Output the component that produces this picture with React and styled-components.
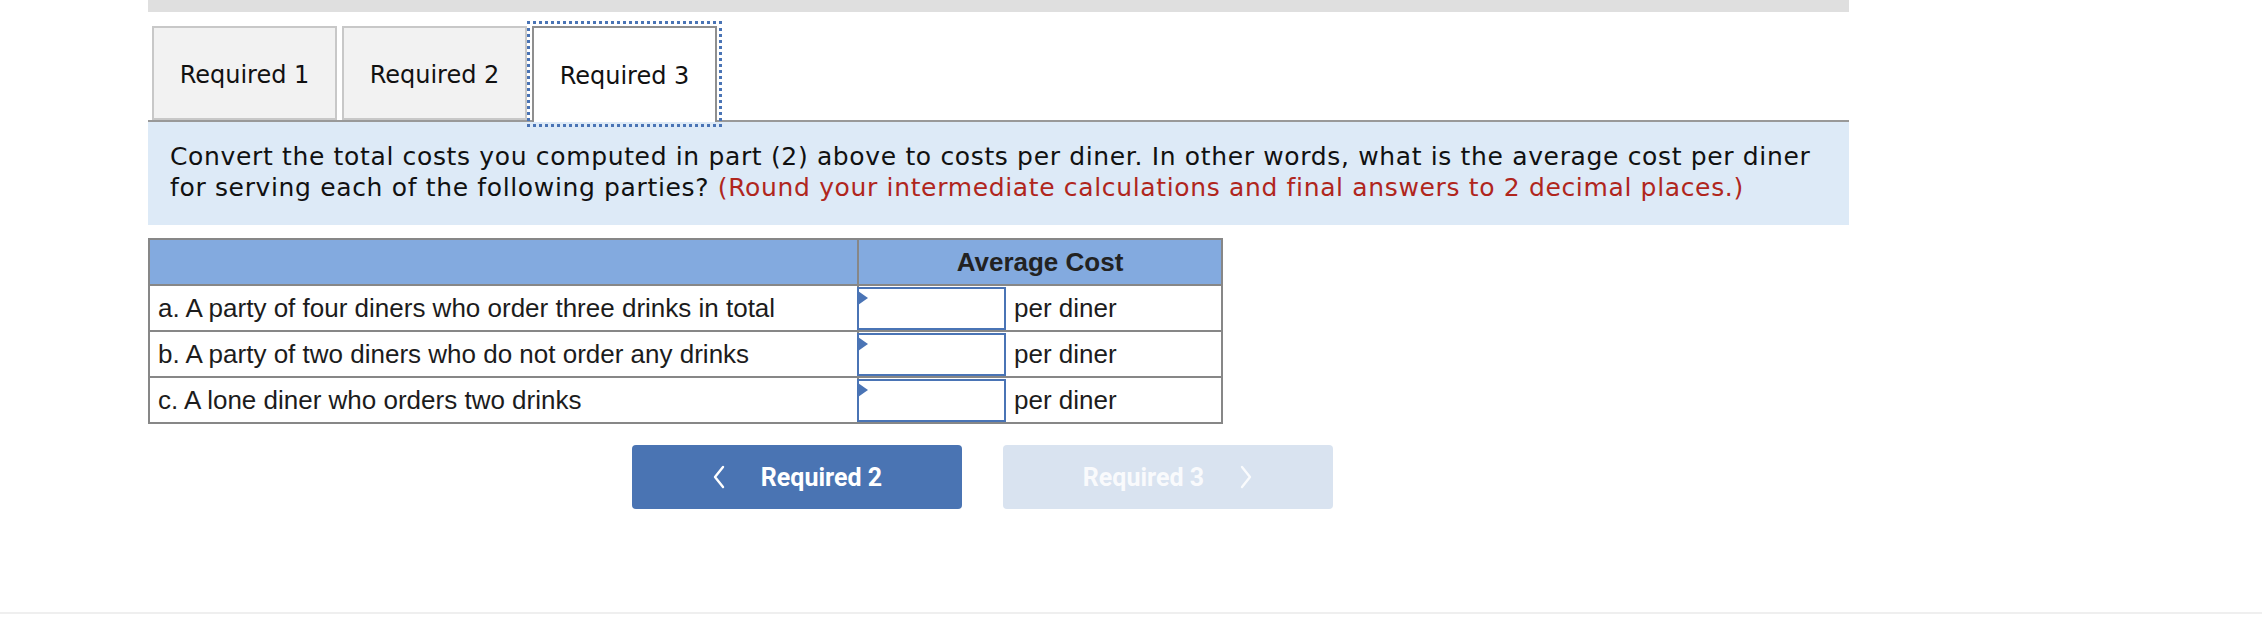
import React from "react"
import styled, { createGlobalStyle } from "styled-components"

const GlobalStyle = createGlobalStyle`
  html, body {
    margin: 0;
    padding: 0;
    background: #ffffff;
  }
  body {
    font-family: "Liberation Sans", Arial, sans-serif;
  }
`

const Page = styled.div`
  width: 2262px;
  height: 614px;
  box-sizing: border-box;
  border-bottom: 2px solid #efefef;
`

const Question = styled.div`
  width: 1701px;
  margin-left: 148px;
`

const TopBar = styled.div`
  height: 12px;
  background: #dfdfdf;
`

const TabStrip = styled.div`
  display: flex;
  gap: 5px;
  margin-top: 14px;
  padding-left: 4px;
  border-bottom: 2px solid #999999;
`

const Tab = styled.button`
  width: 185px;
  box-sizing: border-box;
  margin-bottom: ${p => (p.$active ? "-2px" : "0")};
  height: ${p => (p.$active ? "96px" : "94px")};
  padding: ${p => (p.$active ? "4px 0 2px" : "4px 0 0")};
  background: ${p => (p.$active ? "#ffffff" : "#f2f2f2")};
  border: 2px solid ${p => (p.$active ? "#8f8f8f" : "#c8c8c8")};
  border-bottom: ${p => (p.$active ? "none" : "2px solid #c8c8c8")};
  outline: ${p => (p.$active ? "3px dotted #4a74b5" : "none")};
  outline-offset: 2px;
  font-family: "DejaVu Sans", Verdana, sans-serif;
  font-size: 24px;
  color: #111111;
  cursor: pointer;
`

const Prompt = styled.div`
  background: #ddeaf7;
  padding: 20px 30px 22px 22px;
  font-family: "DejaVu Sans", Verdana, sans-serif;
  font-size: 25px;
  letter-spacing: 0.65px;
  line-height: 30.5px;
  color: #111111;
`

const Hint = styled.span`
  color: #b0261d;
`

const Grid = styled.table`
  margin-top: 13px;
  width: 1073px;
  border-collapse: collapse;
  table-layout: fixed;
  font-family: "Liberation Sans", Arial, sans-serif;
  font-size: 26px;
  color: #1c1c1c;
`

const HeadCell = styled.th`
  height: 44px;
  background: #83aadf;
  border: 2px solid #878787;
  font-weight: bold;
  font-size: 26px;
  color: #222222;
  text-align: center;
  padding: 0;
`

const Cell = styled.td`
  height: 44px;
  border: 2px solid #878787;
  border-left: ${p => (p.$joined ? "none" : "2px solid #878787")};
  border-right: ${p => (p.$open ? "none" : "2px solid #878787")};
  padding: ${p => (p.$tight ? "0" : "0 0 0 8px")};
  vertical-align: middle;
  white-space: nowrap;
`

const AnswerBox = styled.div`
  position: relative;
  height: 43px;
  margin-left: -2px;
  box-sizing: border-box;
  border: 2px solid #4a74b5;
  background: #ffffff;

  &::before {
    content: "";
    position: absolute;
    left: -1px;
    top: 2px;
    border-top: 7px solid transparent;
    border-bottom: 7px solid transparent;
    border-left: 10px solid #4a74b5;
  }
`

const NavRow = styled.div`
  display: flex;
  gap: 41px;
  margin-top: 21px;
  padding-left: 484px;
`

const NavButton = styled.button`
  width: 330px;
  height: 64px;
  border: none;
  border-radius: 4px;
  background: ${p => (p.$disabled ? "#d9e3f0" : "#4a74b3")};
  color: ${p => (p.$disabled ? "rgba(255,255,255,0.85)" : "#ffffff")};
  display: flex;
  align-items: center;
  justify-content: center;
  gap: 35px;
  font-family: Roboto, "Liberation Sans", Arial, sans-serif;
  font-weight: 700;
  font-size: 25px;
  padding: 0;
  cursor: ${p => (p.$disabled ? "default" : "pointer")};
`

const Chevron = ({ dir }) => (
  <svg width="14" height="24" viewBox="0 0 14 24" fill="none">
    <path
      d={dir === "left" ? "M11 2 L3 12 L11 22" : "M3 2 L11 12 L3 22"}
      stroke="currentColor"
      strokeWidth="2.4"
      strokeLinecap="round"
      strokeLinejoin="round"
    />
  </svg>
)

const rows = [
  "a. A party of four diners who order three drinks in total",
  "b. A party of two diners who do not order any drinks",
  "c. A lone diner who orders two drinks",
]

export default function App() {
  return (
    <>
      <GlobalStyle />
      <Page>
        <Question>
          <TopBar />
          <TabStrip>
            <Tab>Required 1</Tab>
            <Tab>Required 2</Tab>
            <Tab $active>Required 3</Tab>
          </TabStrip>
          <Prompt>
            Convert the total costs you computed in part (2) above to costs per diner. In other words, what is the average cost per diner
            for serving each of the following parties?{" "}
            <Hint>(Round your intermediate calculations and final answers to 2 decimal places.)</Hint>
          </Prompt>
          <Grid>
            <colgroup>
              <col style={{ width: "709px" }} />
              <col style={{ width: "148px" }} />
              <col style={{ width: "216px" }} />
            </colgroup>
            <thead>
              <tr>
                <HeadCell />
                <HeadCell colSpan={2}>Average Cost</HeadCell>
              </tr>
            </thead>
            <tbody>
              {rows.map(label => (
                <tr key={label}>
                  <Cell>{label}</Cell>
                  <Cell $tight $open>
                    <AnswerBox />
                  </Cell>
                  <Cell $joined>per diner</Cell>
                </tr>
              ))}
            </tbody>
          </Grid>
          <NavRow>
            <NavButton>
              <Chevron dir="left" />
              Required 2
            </NavButton>
            <NavButton $disabled>
              Required 3
              <Chevron dir="right" />
            </NavButton>
          </NavRow>
        </Question>
      </Page>
    </>
  )
}
